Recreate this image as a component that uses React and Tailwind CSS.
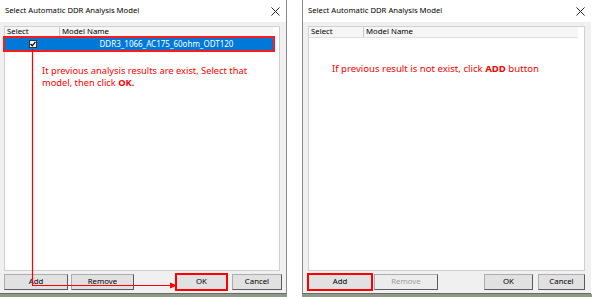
import React from 'react'

const font = { fontFamily: '"Segoe UI", "Noto Sans", "Open Sans", sans-serif' }

function TitleBar() {
  return (
    <div className="h-[22px] bg-white flex items-center justify-between pl-[5px] pr-[6px] shrink-0">
      <span className="text-[7.7px] text-black">Select Automatic DDR Analysis Model</span>
      <svg width="9" height="9" viewBox="0 0 9 9" className="text-gray-800">
        <path d="M0.5 0.5 L8.5 8.5 M8.5 0.5 L0.5 8.5" stroke="currentColor" strokeWidth="1" />
      </svg>
    </div>
  )
}

function Btn({ children, w, red, disabled }) {
  return (
    <div
      className={
        'h-[16px] flex items-center justify-center text-[7.8px] bg-[#e1e1e1] border ' +
        (red ? 'border-[#ff0000] outline outline-1 outline-[#ff0000] ' : 'border-[#adadad] border-r-[#5a5a5a] border-b-[#5a5a5a] ') +
        (disabled ? 'text-[#a0a0a0] bg-[#ececec]' : 'text-black')
      }
      style={{ width: w }}
    >
      {children}
    </div>
  )
}

function Header({ rightEnd }) {
  return (
    <div className="flex h-[11px] bg-[#f6f6f6] border-b border-[#e0e0e0] text-[7.8px] text-black items-center" style={{ marginRight: rightEnd }}>
      <div className="w-[55px] pl-[2px] border-r border-[#c8c8c8] h-full flex items-center">Select</div>
      <div className="pl-[2px] flex items-center">Model Name</div>
    </div>
  )
}

function LeftDialog() {
  return (
    <div className="relative w-[287px] h-[294px] flex flex-col border-r border-[#8a8a8a] border-b border-b-[#6a6a6a]">
      <TitleBar />
      <div className="flex-1 bg-[#f0f0f0] flex flex-col px-[4px] pt-[4px] pb-[3px]">
        <div className="flex-1 bg-white border border-[#d0d0d0] mr-[2px]">
          <Header rightEnd="6px" />
          <div className="relative flex h-[12px] bg-[#0078d7] mr-[6px] text-white text-[8px] items-center outline outline-2 outline-[#ff1a1a]">
            <div className="w-[55px] flex justify-center">
              <div className="w-[8px] h-[8px] bg-white border border-[#333] flex items-center justify-center">
                <svg width="6" height="6" viewBox="0 0 6 6">
                  <path d="M0.6 3 L2.3 4.8 L5.4 0.9" stroke="#000" strokeWidth="1.3" fill="none" />
                </svg>
              </div>
            </div>
            <div className="flex-1 text-center">DDR3_1066_AC175_60ohm_ODT120</div>
          </div>
          <div className="pl-[37px] pt-[15px] text-[9.3px] leading-[12px] text-[#ff0000]">
            <div>It previous analysis results are exist, Select that</div>
            <div>
              model, then click <span className="font-bold">OK.</span>
            </div>
          </div>
        </div>
        <div className="flex mt-[3px] h-[16px] items-center">
          <Btn w="64px">Add</Btn>
          <div className="w-[3px]" />
          <Btn w="63px">Remove</Btn>
          <div className="flex-1" />
          <Btn w="51px" red>OK</Btn>
          <div className="w-[5px]" />
          <Btn w="50px">Cancel</Btn>
        </div>
      </div>
      <svg className="absolute left-0 top-0 pointer-events-none" width="287" height="294">
        <path d="M32.5 49 L32.5 285.5 L172 285.5" stroke="#ff0000" strokeWidth="1.2" fill="none" />
        <path d="M177 285.5 L170 282.5 L170 288.5 Z" fill="#ff0000" />
      </svg>
    </div>
  )
}

function RightDialog() {
  return (
    <div className="w-[289px] h-[294px] flex flex-col border-l border-[#8a8a8a] border-b border-b-[#6a6a6a]">
      <TitleBar />
      <div className="flex-1 bg-[#f0f0f0] flex flex-col pl-[5px] pr-[6px] pt-[4px] pb-[3px]">
        <div className="flex-1 bg-white border border-[#d0d0d0]">
          <Header rightEnd="6px" />
          <div className="pl-[23px] pt-[25px] text-[9.6px] leading-[12px] text-[#ff0000]">
            If previous result is not exist, click <span className="font-bold">ADD</span> button
          </div>
        </div>
        <div className="flex mt-[3px] h-[16px] items-center">
          <Btn w="64px" red>Add</Btn>
          <div className="w-[2px]" />
          <Btn w="64px" disabled>Remove</Btn>
          <div className="flex-1" />
          <Btn w="49px">OK</Btn>
          <div className="w-[5px]" />
          <Btn w="47px">Cancel</Btn>
        </div>
      </div>
    </div>
  )
}

export default function App() {
  return (
    <div className="w-[592px] h-[297px] bg-white overflow-hidden" style={font}>
      <div className="flex gap-[15px]">
        <LeftDialog />
        <RightDialog />
      </div>
      <div className="flex gap-[15px] h-[3px]">
        <div className="w-[287px] bg-[#8f9a86]" />
        <div className="w-[290px] bg-[#8f9a86]" />
      </div>
    </div>
  )
}
